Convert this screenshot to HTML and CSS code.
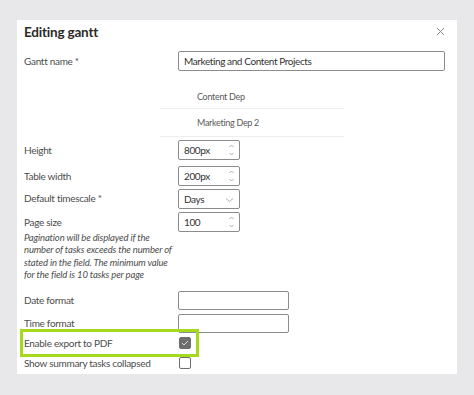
FILE: index.html
```html
<!DOCTYPE html>
<html>
<head>
<meta charset="utf-8">
<link rel="stylesheet" href="styles.css">
</head>
<body>
<div class="panel">
  <div class="header">
    <div class="title">Editing gantt</div>
    <svg class="close" width="9" height="9" viewBox="0 0 9 9"><path d="M1 1L8 8M8 1L1 8" stroke="#888" stroke-width="1"/></svg>
  </div>

  <div class="row r-name">
    <div class="label">Gantt name *</div>
    <div class="input wide">Marketing and Content Projects</div>
  </div>

  <div class="dlist">
    <div class="ditem d1">Content Dep</div>
    <div class="ditem d2">Marketing Dep 2</div>
  </div>

  <div class="row r-height">
    <div class="label">Height</div>
    <div class="input num">800px<svg class="spin" width="7" height="14" viewBox="0 0 7 14"><path d="M1.5 4L3.5 2L5.5 4M1.5 10L3.5 12L5.5 10" fill="none" stroke="#999" stroke-width="0.8"/></svg></div>
  </div>

  <div class="row r-table">
    <div class="label">Table width</div>
    <div class="input num">200px<svg class="spin" width="7" height="14" viewBox="0 0 7 14"><path d="M1.5 4L3.5 2L5.5 4M1.5 10L3.5 12L5.5 10" fill="none" stroke="#999" stroke-width="0.8"/></svg></div>
  </div>

  <div class="row r-scale">
    <div class="label up">Default timescale *</div>
    <div class="input num">Days<svg class="chev" width="9" height="6" viewBox="0 0 9 6"><path d="M1 1.5L4.5 4.5L8 1.5" fill="none" stroke="#aaa" stroke-width="0.9"/></svg></div>
  </div>

  <div class="row r-page">
    <div class="label">Page size</div>
    <div class="input num">100<svg class="spin" width="7" height="14" viewBox="0 0 7 14"><path d="M1.5 4L3.5 2L5.5 4M1.5 10L3.5 12L5.5 10" fill="none" stroke="#999" stroke-width="0.8"/></svg></div>
  </div>

  <div class="help">Pagination will be displayed if the<br>number of tasks exceeds the number of<br>stated in the field. The minimum value<br>for the field is 10 tasks per page</div>

  <div class="row r-date">
    <div class="label">Date format</div>
    <div class="input mid"></div>
  </div>

  <div class="row r-time">
    <div class="label">Time format</div>
    <div class="input mid"></div>
  </div>

  <div class="row r-pdf">
    <div class="label">Enable export to PDF</div>
    <div class="check on"><svg width="8" height="6" viewBox="0 0 8 6"><path d="M1 3L3 5L7 1" fill="none" stroke="#ddd" stroke-width="1"/></svg></div>
  </div>

  <div class="row r-sum">
    <div class="label">Show summary tasks collapsed</div>
    <div class="check"></div>
  </div>

  <div class="highlight"></div>
</div>
</body>
</html>
```

FILE: styles.css
```css
html, body {
  margin: 0;
  padding: 0;
}
body {
  width: 474px;
  height: 395px;
  background: #e8e8ea;
  font-family: "Lato", "Noto Sans", sans-serif;
  overflow: hidden;
}
.panel {
  position: relative;
  margin: 20px 0 0 17px;
  width: 440px;
  height: 354px;
  background: #fff;
  padding-left: 7px;
  box-sizing: border-box;
  overflow: hidden;
}
.header {
  height: 24px;
  display: flex;
  align-items: center;
  justify-content: space-between;
  padding-right: 12px;
}
.title {
  font-size: 13.5px;
  font-weight: 700;
  color: #2a2a2a;
  letter-spacing: -0.2px;
}
.close {
  margin-top: -2px;
}
.row {
  display: flex;
  align-items: center;
}
.label {
  width: 154px;
  font-size: 10px;
  letter-spacing: -0.3px;
  color: #4d4d4d;
  flex-shrink: 0;
  white-space: nowrap;
}
.label.up {
  margin-top: -3px;
}
.input {
  height: 20px;
  box-sizing: border-box;
  border: 1px solid #8c8c8c;
  border-radius: 2px;
  font-size: 10px;
  letter-spacing: -0.4px;
  color: #333;
  padding-left: 5px;
  display: flex;
  align-items: center;
  position: relative;
}
.input.wide { width: 267px; }
.input.num { width: 62px; }
.input.mid { width: 111px; height: 19px; }
.spin {
  position: absolute;
  right: 4px;
  top: 2px;
}
.chev {
  position: absolute;
  right: 5px;
  top: 7px;
}
.r-name { margin-top: 7px; }
.dlist {
  margin: 14px 0 0 136px;
  width: 184px;
}
.ditem {
  font-size: 9px;
  letter-spacing: -0.3px;
  color: #5a5a5a;
  padding-left: 37px;
  display: flex;
  align-items: center;
  box-sizing: border-box;
  border-bottom: 1px solid #eeeeee;
}
.d1 { height: 24px; }
.d2 { height: 28px; }
.r-height { margin-top: 3px; }
.r-table { margin-top: 6px; }
.r-scale { margin-top: 3px; }
.r-page { margin-top: 3px; }
.help {
  font-size: 9.5px;
  letter-spacing: -0.15px;
  font-style: italic;
  line-height: 12.4px;
  color: #4d4d4d;
  white-space: nowrap;
}
.r-date { margin-top: 9px; }
.r-time { margin-top: 4px; }
.check {
  width: 12px;
  height: 12px;
  box-sizing: border-box;
  border: 1px solid #6e6e6e;
  border-radius: 2px;
  margin-left: 1px;
  display: flex;
  align-items: center;
  justify-content: center;
}
.check.on {
  background: #6e6e6e;
}
.r-pdf { margin-top: 4px; }
.r-sum { margin-top: 8px; }
.highlight {
  position: absolute;
  left: 3px;
  top: 309px;
  width: 179px;
  height: 28px;
  border: 3px solid #a6d81c;
  box-sizing: border-box;
}
```
